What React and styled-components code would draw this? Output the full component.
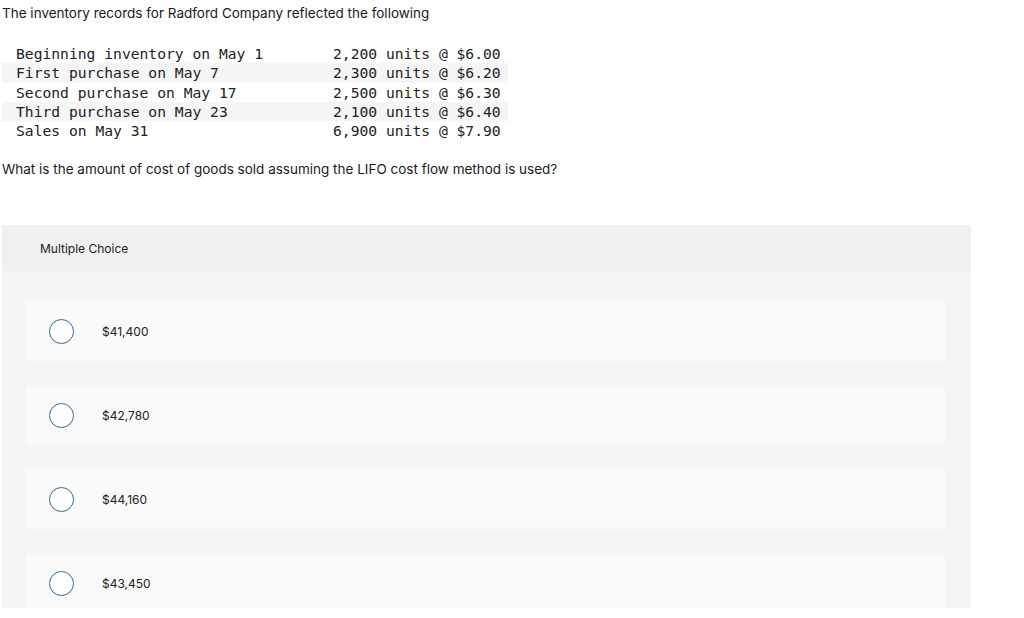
import React from "react";
import styled, { createGlobalStyle } from "styled-components";

const Global = createGlobalStyle`
  html, body { margin: 0; padding: 0; background: #ffffff; }
  body { font-family: Inter, "Liberation Sans", Arial, sans-serif; color: #1a1a1a; }
`;

const Page = styled.div`
  width: 1024px;
  height: 618px;
  overflow: hidden;
  padding: 5px 0 0 2px;
  box-sizing: border-box;
`;

const Para = styled.p`
  margin: ${(p) => p.$m || "0"};
  font-size: 13.5px;
  line-height: 17px;
  color: #1a1a1a;
`;

const Records = styled.table`
  border-collapse: collapse;
  margin: 22px 0 0 0;
  font-family: "DejaVu Sans Mono", monospace;
  font-size: 14.67px;
  color: #222;
`;

const Row = styled.tr`
  background: ${(p) => (p.$shade ? "#f5f5f5" : "transparent")};
  height: 19.3px;
`;

const Label = styled.td`
  padding: 0 0 0 14px;
  width: 317px;
  line-height: 19.3px;
  white-space: pre;
`;

const Amount = styled.td`
  padding: 0 7px 0 0;
  line-height: 19.3px;
  white-space: pre;
`;

const Panel = styled.section`
  margin-top: 47px;
  width: 969px;
  height: 383px;
  overflow: hidden;
  background: #f5f5f5;
`;

const PanelHeader = styled.div`
  height: 46px;
  background: #f0f0f0;
  display: flex;
  align-items: center;
  padding-left: 38px;
  font-size: 12px;
  color: #222;
`;

const Options = styled.div`
  display: flex;
  flex-direction: column;
  gap: 24px;
  padding: 30px 26px 0 24px;
`;

const Option = styled.label`
  height: 60px;
  flex-shrink: 0;
  background: #fafafa;
  border-radius: 2px;
  display: flex;
  align-items: center;
  padding-left: 23px;
  cursor: pointer;
`;

const Radio = styled.span`
  width: 23px;
  height: 23px;
  border: 1px solid #2f6aa6;
  border-radius: 50%;
  background: #fff;
  flex-shrink: 0;
`;

const OptionText = styled.span`
  margin-left: 28px;
  font-size: 12px;
  color: #222;
`;

const records = [
  ["Beginning inventory on May 1", "2,200 units @ $6.00"],
  ["First purchase on May 7", "2,300 units @ $6.20"],
  ["Second purchase on May 17", "2,500 units @ $6.30"],
  ["Third purchase on May 23", "2,100 units @ $6.40"],
  ["Sales on May 31", "6,900 units @ $7.90"],
];

const choices = ["$41,400", "$42,780", "$44,160", "$43,450"];

export default function App() {
  return (
    <>
      <Global />
      <Page>
        <Para>The inventory records for Radford Company reflected the following</Para>
        <Records>
          <tbody>
            {records.map(([a, b], i) => (
              <Row key={a} $shade={i % 2 === 1}>
                <Label>{a}</Label>
                <Amount>{b}</Amount>
              </Row>
            ))}
          </tbody>
        </Records>
        <Para $m="21px 0 0 0">
          What is the amount of cost of goods sold assuming the LIFO cost flow method is used?
        </Para>
        <Panel>
          <PanelHeader>Multiple Choice</PanelHeader>
          <Options>
            {choices.map((c) => (
              <Option key={c}>
                <Radio />
                <OptionText>{c}</OptionText>
              </Option>
            ))}
          </Options>
        </Panel>
      </Page>
    </>
  );
}
